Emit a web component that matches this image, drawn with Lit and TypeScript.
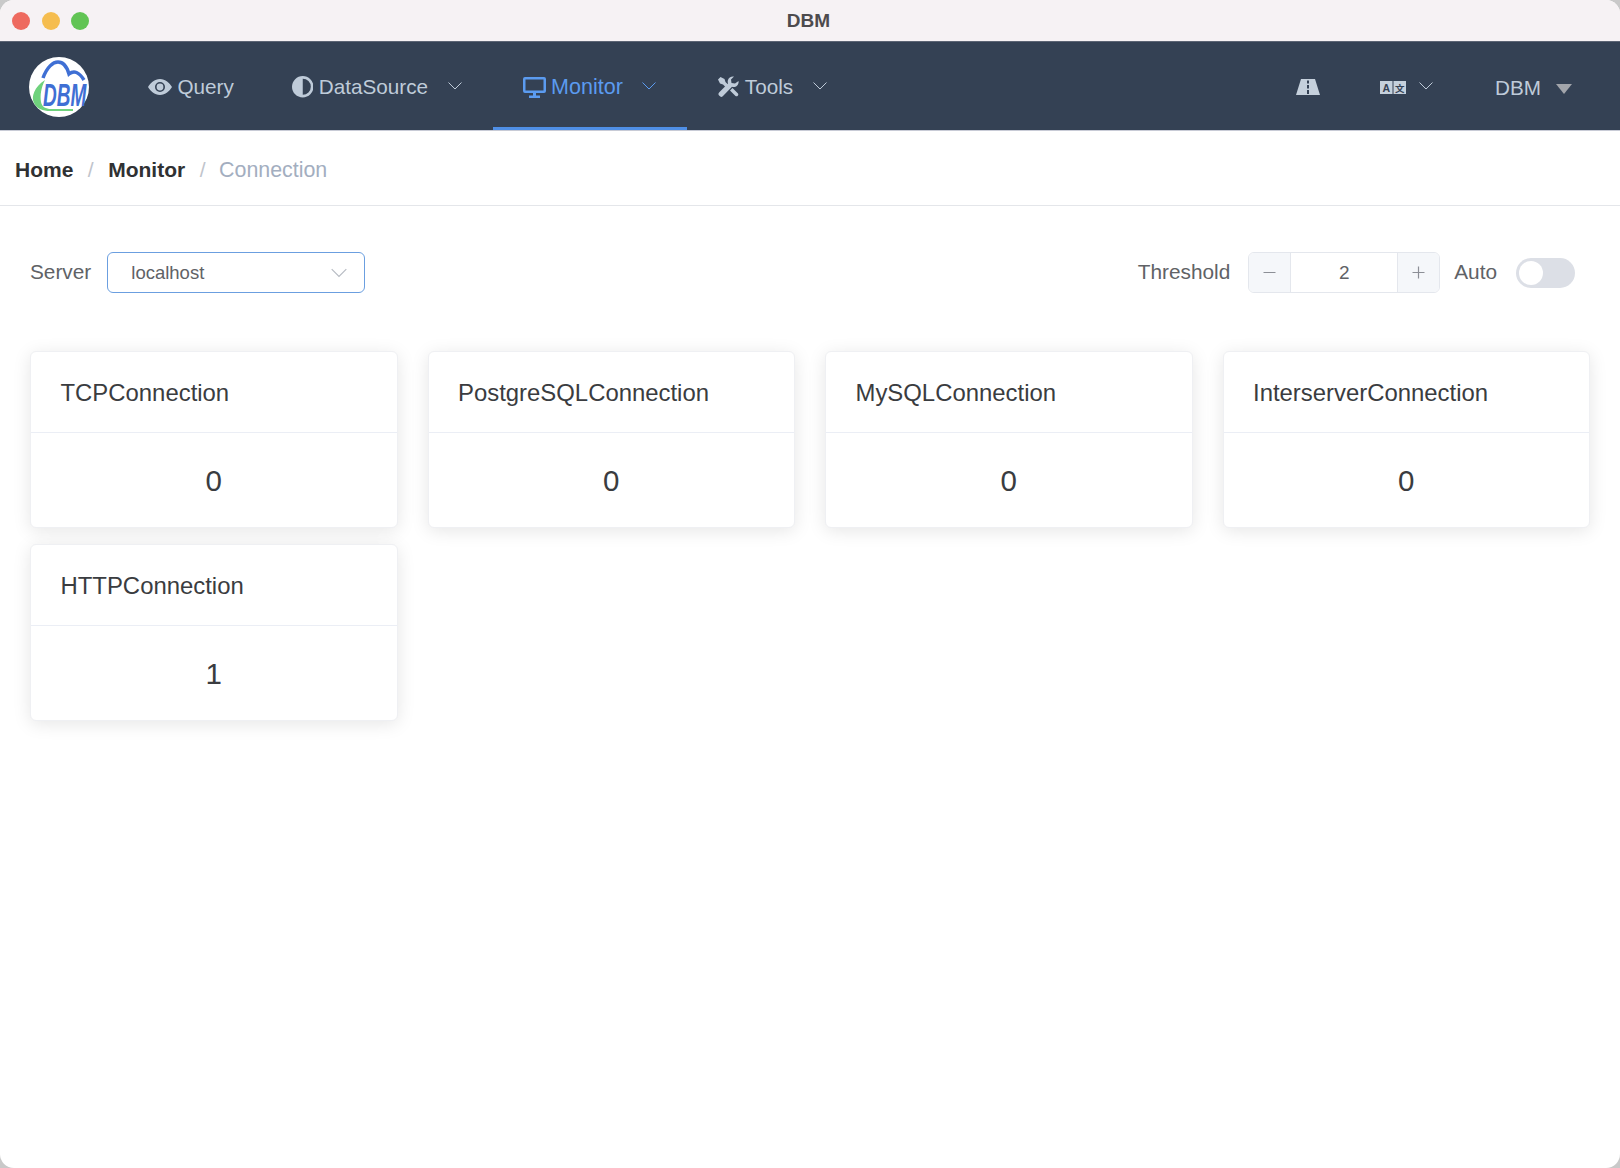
import { LitElement, html, css, svg } from 'lit'
import { customElement, state } from 'lit/decorators.js'

const chevron = svg`<path d="M1.500 4.500 8 11 14.500 4.500" fill="none" stroke="currentColor" stroke-width="1" />`

@customElement('app-root')
export class AppRoot extends LitElement {
  static styles = css`
    :host {
      display: block;
      height: 1168px;
      background: #c9c9c9;
      font-family: 'Liberation Sans', Arial, sans-serif;
      color: #303133;
    }

    .window {
      height: 1168px;
      background: #fff;
      border-radius: 14px;
      overflow: hidden;
      display: flex;
      flex-direction: column;
    }

    .titlebar {
      height: 41px;
      flex: none;
      background: #f6f2f4;
      display: flex;
      align-items: center;
      position: relative;
      box-sizing: border-box;
      padding-left: 12px;
      gap: 11.5px;
    }

    .light {
      width: 18px;
      height: 18px;
      border-radius: 50%;
    }
    .red { background: #ee6a5f; }
    .yellow { background: #f5bd4f; }
    .green { background: #61c454; }

    .title {
      position: absolute;
      left: 0;
      right: 3px;
      text-align: center;
      font-size: 19px;
      font-weight: bold;
      color: #4d4b4d;
    }

    .nav {
      height: 90px;
      flex: none;
      box-sizing: border-box;
      background: #344154;
      display: flex;
      align-items: stretch;
      color: #bfcbd9;
      font-size: 20.7px;
      border-top: 1px solid #5c6474;
      border-bottom: 1px solid #c8cbd6;
    }

    .logo {
      width: 60px;
      height: 60px;
      margin: 15px 29px 0 29px;
      flex: none;
    }

    .item {
      display: flex;
      align-items: center;
      padding: 2px 30px 0;
      box-sizing: border-box;
      position: relative;
    }
    .item svg.icon { margin-right: 5.5px; flex: none; }
    .item svg.half { margin-left: -2px; }
    .item .caret { margin-left: 18.5px; flex: none; width: 16px; height: 16px; position: relative; top: -1px; }

    .item.active { color: #5b9bf0; font-size: 21.5px; }
    .item.active::after {
      content: '';
      position: absolute;
      left: 0;
      right: 0;
      bottom: 0;
      height: 3px;
      background: #4f8fe6;
    }

    .spacer { flex: 1; }

    .road { margin-right: 60px; margin-top: 2px; align-self: center; flex: none; }
    .lang { display: flex; align-items: center; margin-right: 61px; padding-top: 3px; }
    .lang .caret { margin-left: 12px; width: 16px; height: 16px; position: relative; top: -2px; }
    .user { display: flex; align-items: center; margin-right: 48px; padding-top: 4px; }
    .triangle {
      margin-left: 15px;
      width: 0;
      height: 0;
      border-left: 8.5px solid transparent;
      border-right: 8.5px solid transparent;
      border-top: 10px solid #a2a5ab;
      position: relative;
      top: 1px;
    }

    .crumbs {
      height: 75px;
      flex: none;
      box-sizing: border-box;
      border-bottom: 1px solid #e4e6ea;
      padding: 3px 15px 0;
      display: flex;
      align-items: center;
      font-size: 21px;
    }
    .crumbs b { color: #303133; }
    .crumbs .sep { color: #c0c4cc; margin: 0 14.5px; }
    .crumbs .last { color: #a3aec0; font-size: 21.4px; margin: 1px 0 0 -1px; }

    .content { padding: 46px 30px 0; }

    .toolbar {
      display: flex;
      align-items: center;
      height: 41px;
      font-size: 20.8px;
      color: #606266;
    }
    .label { margin-top: -2px; }

    .select {
      width: 258px;
      height: 41px;
      box-sizing: border-box;
      margin-left: 16px;
      border: 1.5px solid #6b9fe0;
      border-radius: 6px;
      display: flex;
      align-items: center;
      justify-content: space-between;
      padding: 0 16px 0 23px;
      font-size: 18.5px;
      color: #606266;
    }
    .select svg { width: 18px; height: 18px; color: #b6bac2; }

    .stepper {
      margin-left: 18px;
      width: 192px;
      height: 41px;
      box-sizing: border-box;
      border: 1.5px solid #e4e7ed;
      border-radius: 6px;
      display: grid;
      grid-template-columns: 41px 1fr 41px;
      align-items: stretch;
      font-size: 19px;
      overflow: hidden;
    }
    .stepper > span {
      display: flex;
      align-items: center;
      justify-content: center;
    }
    .stepper .btn { background: #f5f7fa; }
    .stepper .btn svg { width: 13px; height: 13px; color: #8c8f96; }
    .stepper .mid {
      border-left: 1.5px solid #e4e7ed;
      border-right: 1.5px solid #e4e7ed;
    }

    .auto { margin-left: 14px; }

    .switch {
      margin-left: 19px;
      margin-right: 15px;
      width: 59px;
      height: 30px;
      border-radius: 15px;
      background: #dcdfe6;
      position: relative;
    }
    .switch::after {
      content: '';
      position: absolute;
      left: 3px;
      top: 3px;
      width: 24px;
      height: 24px;
      border-radius: 50%;
      background: #fff;
    }

    .grid {
      margin-top: 58px;
      display: grid;
      grid-template-columns: repeat(4, 1fr);
      column-gap: 30px;
      row-gap: 16px;
    }

    .card {
      height: 177px;
      box-sizing: border-box;
      background: #fff;
      border: 1px solid #eff0f3;
      border-radius: 6px;
      box-shadow: 0 3px 18px rgba(0, 0, 0, 0.1);
      overflow: hidden;
    }
    .card header {
      height: 81px;
      box-sizing: border-box;
      padding: 2px 0 0 29.5px;
      display: flex;
      align-items: center;
      border-bottom: 1px solid #ebeef5;
      font-size: 23.9px;
      color: #3a3c40;
    }
    .card div {
      height: 94px;
      padding-top: 2px;
      box-sizing: border-box;
      display: flex;
      align-items: center;
      justify-content: center;
      font-size: 29.5px;
      color: #3a3c40;
    }
  `

  @state() private cards = [
    { name: 'TCPConnection', value: 0 },
    { name: 'PostgreSQLConnection', value: 0 },
    { name: 'MySQLConnection', value: 0 },
    { name: 'InterserverConnection', value: 0 },
    { name: 'HTTPConnection', value: 1 },
  ]

  private caret() {
    return html`<svg class="caret" viewBox="0 0 16 16">${chevron}</svg>`
  }

  private logo() {
    return html`<svg class="logo" viewBox="0 0 60 60">
      <circle cx="30" cy="30" r="30" fill="#fff" />
      <path d="M14 21C18 10 24 5 29 5c6 0 9 5 11 12 5-4 10-2 15 6" fill="none" stroke="#3f6fd4" stroke-width="3.5" />
      <path d="M16 23C5 30 2 40 5 46c3 6 9 8 16 8h23v-2H22c-5 0-9-2-10-7-1-7 0-14 4-22z" fill="#6fd27d" />
      <g transform="translate(14 49) scale(0.76 1.25)">
        <text font-family="'Liberation Sans'" font-size="25" font-weight="bold" font-style="italic" fill="#3f6fd4">DBM</text>
      </g>
    </svg>`
  }

  render() {
    return html`
      <div class="window">
        <div class="titlebar">
          <span class="light red"></span>
          <span class="light yellow"></span>
          <span class="light green"></span>
          <span class="title">DBM</span>
        </div>
        <nav class="nav">
          ${this.logo()}
          <div class="item">
            <svg class="icon" width="24" height="18" viewBox="0 0 24 18">
              <path fill="currentColor" fill-rule="evenodd" d="M12 1C6.500 1 2.500 5 0 9c2.500 4 6.500 8 12 8s9.500-4 12-8c-2.500-4-6.500-8-12-8zm0 3a5 5 0 1 1 0 10 5 5 0 0 1 0-10z" />
              <circle cx="12" cy="9" r="3.400" fill="currentColor" />
            </svg>
            Query
          </div>
          <div class="item">
            <svg class="icon half" width="21.5" height="21.5" viewBox="0 0 20 20">
              <path fill="currentColor" fill-rule="evenodd" d="M10 0a10 10 0 1 0 0 20 10 10 0 0 0 0-20zm0 2.500a7.500 7.500 0 0 1 0 15z" />
            </svg>
            DataSource ${this.caret()}
          </div>
          <div class="item active">
            <svg class="icon" width="23" height="21" viewBox="0 0 23 21">
              <path fill="currentColor" fill-rule="evenodd" d="M2 0h19a2 2 0 0 1 2 2v12a2 2 0 0 1-2 2H2a2 2 0 0 1-2-2V2a2 2 0 0 1 2-2zm.500 2.500v11h18v-11zM10 16h3v2.500h-3zM6 18.500h11V21H6z" />
            </svg>
            Monitor ${this.caret()}
          </div>
          <div class="item">
            <svg class="icon" width="22" height="22" viewBox="0 0 22 22">
              <path fill="currentColor" d="M1 3.500 3.500 1l4 2 1 3 4 4-2.500 2.500-4-4-3-1z" />
              <path fill="currentColor" d="M21.500 5c.5 2.500-1 5.500-4 6-1 .2-1.800 0-2.500-.2L6 20a2.400 2.400 0 0 1-3.600-.2A2.400 2.400 0 0 1 2.300 16.300L11 7.500c-.4-1-.4-2-.2-3C11.500 1.500 14.500 0 17 .5l-3 3 .5 3.500 3.500.5z" />
              <path fill="currentColor" d="M13 14.500l2.500-2.500 5.500 5.500a1.800 1.800 0 0 1-2.500 2.500z" />
            </svg>
            Tools ${this.caret()}
          </div>
          <span class="spacer"></span>
          <svg class="road" width="24" height="16" viewBox="0 0 24 16" fill="#c5d0dc">
            <path fill-rule="evenodd" d="M5 0h14l5 16H0zM11 1.500v3h2v-3zM11 6v3.500h2V6zM11 11v4h2v-4z" />
          </svg>
          <div class="lang">
            <svg width="26" height="13" viewBox="0 0 26 13">
              <rect width="12.500" height="13" fill="#c5d0dc" />
              <rect x="13.500" width="12.500" height="13" fill="#c5d0dc" />
              <text x="6.200" y="10.500" text-anchor="middle" font-family="'Liberation Sans'" font-size="10.500" font-weight="bold" fill="#344154">A</text>
              <text x="19.700" y="10.500" text-anchor="middle" font-family="'Noto Sans CJK SC', sans-serif" font-size="9.500" font-weight="bold" fill="#344154">文</text>
            </svg>
            ${this.caret()}
          </div>
          <div class="user">DBM<span class="triangle"></span></div>
        </nav>
        <div class="crumbs">
          <b>Home</b><span class="sep">/</span><b>Monitor</b><span class="sep">/</span><span class="last">Connection</span>
        </div>
        <main class="content">
          <div class="toolbar">
            <span class="label">Server</span>
            <div class="select">
              <span>localhost</span>
              <svg viewBox="0 0 16 16">${chevron}</svg>
            </div>
            <span class="spacer"></span>
            <span class="label">Threshold</span>
            <div class="stepper">
              <span class="btn"><svg viewBox="0 0 13 13"><path d="M0.500 6.500h12" stroke="currentColor" stroke-width="1.200" /></svg></span>
              <span class="mid">2</span>
              <span class="btn"><svg viewBox="0 0 13 13"><path d="M0.500 6.500h12M6.500 0.500v12" stroke="currentColor" stroke-width="1.200" /></svg></span>
            </div>
            <span class="auto label">Auto</span>
            <span class="switch"></span>
          </div>
          <section class="grid">
            ${this.cards.map(
              (c) => html`<article class="card">
                <header>${c.name}</header>
                <div>${c.value}</div>
              </article>`,
            )}
          </section>
        </main>
      </div>
    `
  }
}
